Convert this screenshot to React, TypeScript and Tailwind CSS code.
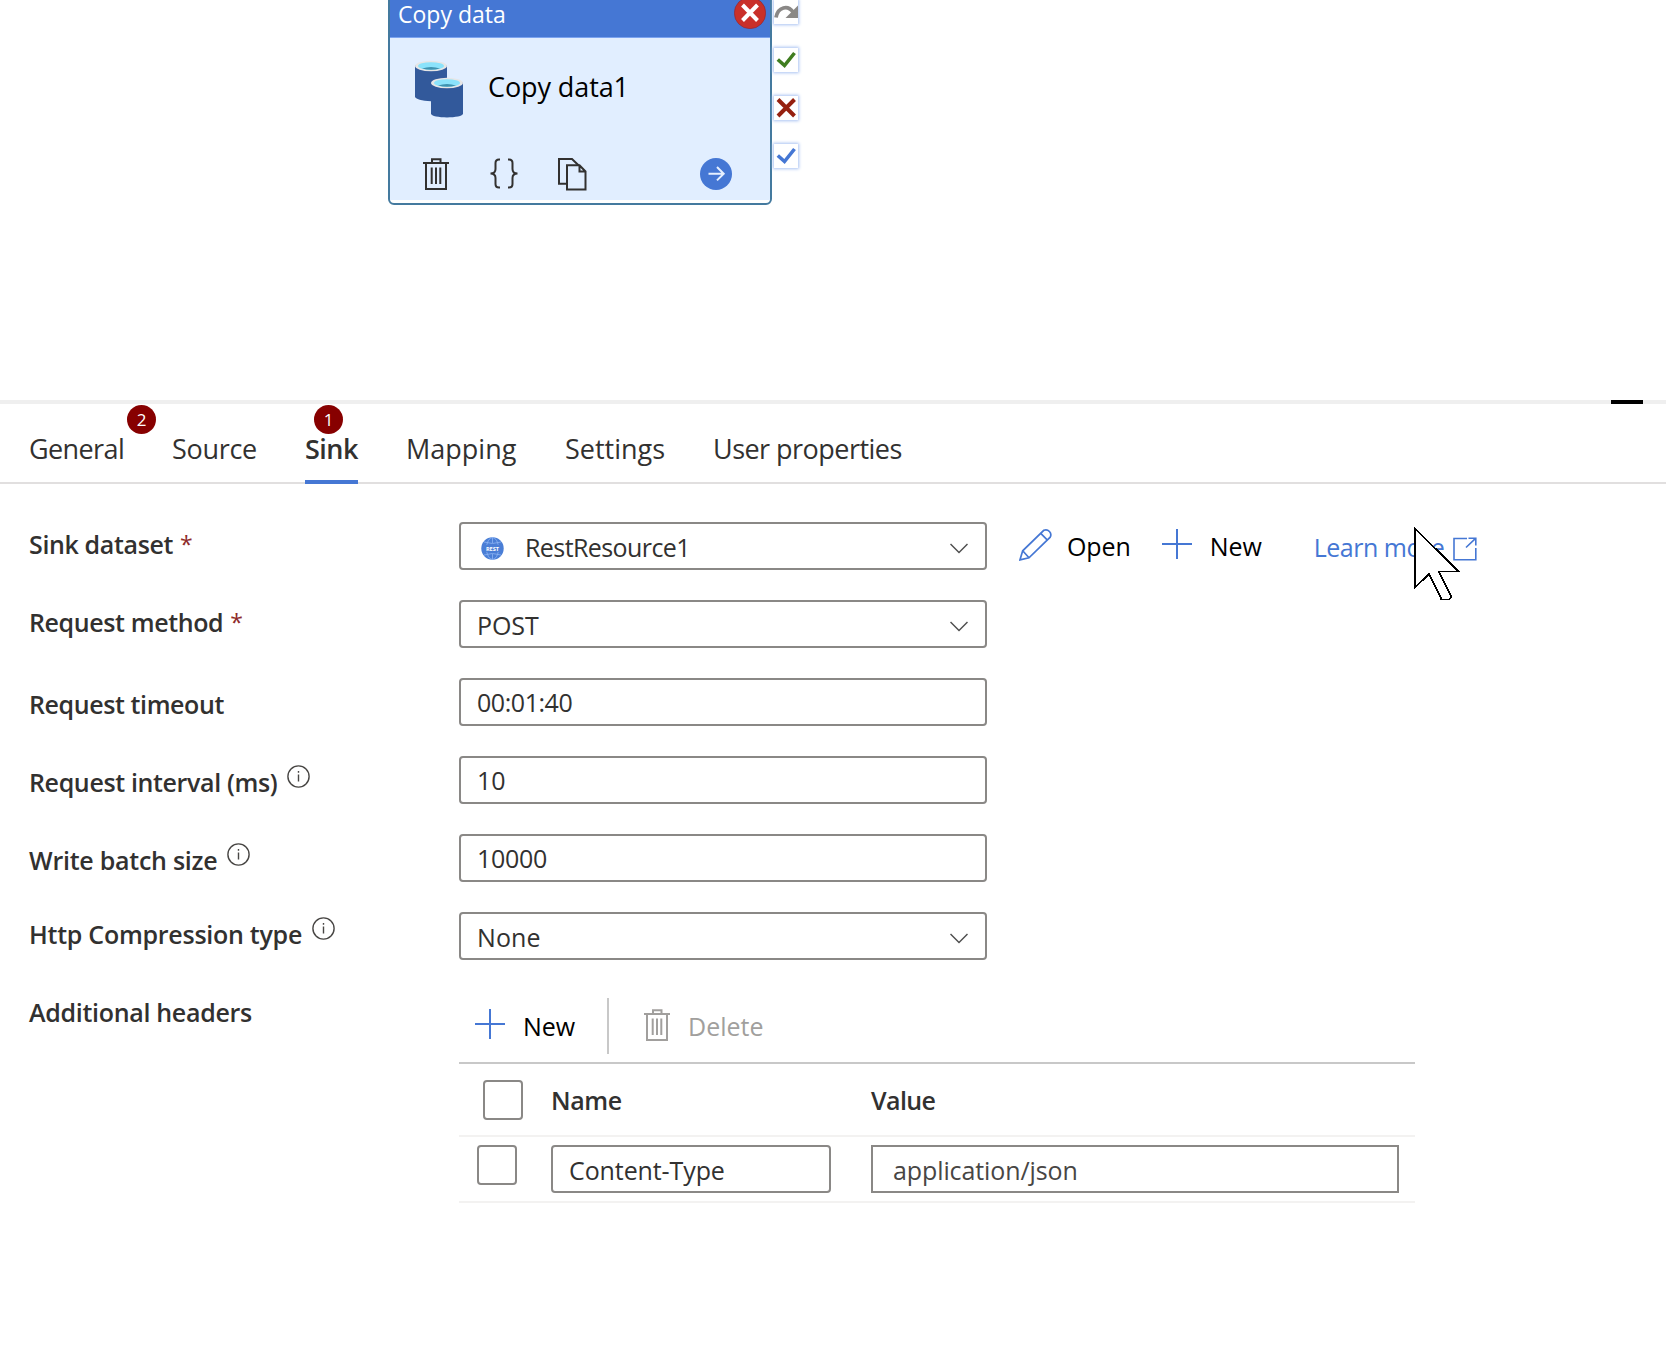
import type { ReactNode } from "react";

const BLUE = "#4577d4";

function DatabaseIcon() {
  return (
    <svg width="50" height="58" viewBox="0 0 50 58">
      <path d="M1 5.5V36.500C1 39 8 41.200 17 41.200H33V5.500Z" fill="#32599b" />
      <ellipse cx="17" cy="6" rx="16" ry="5.200" fill="#e6e6e6" />
      <ellipse cx="17" cy="6" rx="13" ry="3.800" fill="#8be3fb" />
      <path d="M8 8.600Q17 5.400 26 8.600Q17 11 8 8.600Z" fill="#3f93b0" />
      <path d="M17 22.500V53.600C17 58.800 49 58.800 49 53.600V22.500Z" fill="#32599b" />
      <ellipse cx="33" cy="23" rx="16" ry="5.200" fill="#e6e6e6" />
      <ellipse cx="33" cy="23" rx="13" ry="3.800" fill="#8be3fb" />
      <path d="M24 25.600Q33 22.400 42 25.600Q33 28 24 25.600Z" fill="#3f93b0" />
    </svg>
  );
}

function TrashIcon({ color }: { color: string }) {
  return (
    <svg width="26" height="32" viewBox="0 0 26 32" fill="none" stroke={color} strokeWidth="2">
      <path d="M0 5H26M9 5V1.200H17.500V5M3 5V31H23V5M8.700 9.500V26M13 9.500V26M17.300 9.500V26" />
    </svg>
  );
}

function BracesIcon() {
  return (
    <svg width="28" height="31" viewBox="0 0 28 31" fill="none" stroke="#323130" strokeWidth="2">
      <path d="M10 1.500H9Q5.500 1.500 5.500 5V11Q5.500 15.500 0.500 15.500Q5.500 15.500 5.500 20V26Q5.500 29.500 9 29.500H10" />
      <path d="M18 1.500H19Q22.500 1.500 22.500 5V11Q22.500 15.500 27.500 15.500Q22.500 15.500 22.500 20V26Q22.500 29.500 19 29.500H18" />
    </svg>
  );
}

function CopyIcon() {
  return (
    <svg width="29" height="33" viewBox="0 0 29 33" fill="none" stroke="#323130" strokeWidth="2">
      <path d="M8.500 25.800H1V1H14L20.500 7.200" />
      <path d="M9 7.200H21.500L27.500 13.500V31.500H9ZM21.500 7.200V13.500H27.500" />
    </svg>
  );
}

function RunIcon() {
  return (
    <svg width="32" height="32" viewBox="0 0 32 32" fill="none" stroke="#e6f0ff" strokeWidth="2">
      <circle cx="16" cy="16" r="16" fill={BLUE} stroke="none" />
      <path d="M8.500 15.700H23.500M17 9L23.700 15.700L17 22.400" />
    </svg>
  );
}

function ErrorIcon() {
  return (
    <svg width="32" height="32" viewBox="0 0 32 32">
      <circle cx="16" cy="16" r="15.700" fill="#c9302a" stroke="#8f2433" strokeWidth="0.600" />
      <path d="M8.500 8L23.500 23.500M23.500 8L8.500 23.500" stroke="#fff" strokeWidth="4" />
    </svg>
  );
}

function PlusIcon() {
  return (
    <svg width="30" height="30" viewBox="0 0 30 30" fill="none" stroke={BLUE} strokeWidth="2">
      <path d="M0 15H30M15 0V30" />
    </svg>
  );
}

function PencilIcon() {
  return (
    <svg width="33" height="33" viewBox="0 0 33 33" fill="none" stroke={BLUE} strokeWidth="1.700">
      <path d="M1 31.800L3.700 22.800L24.800 2.300A5 5 0 0 1 31.200 9.200L10 29.800Z" />
      <path d="M3.700 22.800L10 29.800M21.500 5.200L28.400 12.200" />
    </svg>
  );
}

function ExternalIcon() {
  return (
    <svg width="24" height="24" viewBox="0 0 24 24" fill="none" stroke={BLUE} strokeWidth="1.600">
      <path d="M14 1.500H1V22.800H22.800V11" />
      <path d="M13 10.500L22.600 1.300M15.500 1.300H22.800V8.500" />
    </svg>
  );
}

function InfoIcon() {
  return (
    <svg className="-mt-3 shrink-0" width="23" height="23" viewBox="0 0 23 23" fill="none" stroke="#484644">
      <circle cx="11.500" cy="11.500" r="10.600" strokeWidth="1.400" />
      <path d="M11.500 9.500V16.500M11.500 6V7.800" strokeWidth="1.400" />
    </svg>
  );
}

function RestIcon() {
  return (
    <svg width="23" height="23" viewBox="0 0 23 23">
      <circle cx="11.500" cy="11.500" r="11.200" fill="#4a7ed6" />
      <g fill="none" stroke="#8db4f2" strokeWidth="0.800">
        <ellipse cx="11.500" cy="11.500" rx="6" ry="11" />
        <path d="M3 5Q11.500 8 20 5M3 18Q11.500 15 20 18M11.500 0V6M11.500 17V23" />
      </g>
      <rect x="2.500" y="7.800" width="18" height="7" fill="#4a7ed6" />
      <text x="11.500" y="13.600" fontSize="5.600" fontWeight="700" fontFamily="Open Sans, sans-serif" textAnchor="middle" fill="#fff">
        REST
      </text>
    </svg>
  );
}

function Chevron() {
  return (
    <svg className="mt-[5px]" width="18" height="11" viewBox="0 0 18 11" fill="none" stroke="#505050" strokeWidth="1.500">
      <path d="M0.500 1L9 9.500L17.500 1" />
    </svg>
  );
}

function Cursor() {
  return (
    <svg className="absolute left-[1412px] top-[524px]" width="50" height="80" viewBox="0 0 50 80">
      <path
        d="M3 4.500V63.500L17 50L29.500 75.500H37L39.500 73L27 47.500H46.500Z"
        fill="#fff"
        stroke="#000"
        strokeWidth="1.800"
        shapeRendering="crispEdges"
      />
    </svg>
  );
}

function SideBox({ children }: { children: ReactNode }) {
  return (
    <div className="size-6 bg-white shadow-[0_0_3px_1px_#a9c2f2]">
      <svg width="24" height="24" viewBox="0 0 24 24" fill="none">
        {children}
      </svg>
    </div>
  );
}

function ActivityNode() {
  return (
    <>
      <div className="absolute left-[388px] -top-5 flex h-[225px] w-[384px] flex-col rounded-md border-2 border-[#447a9f] bg-white pb-[3px]">
        <div className="flex h-14 items-end justify-between border-b border-[#7ba3f0] bg-[#4577d4] pl-2 pr-1">
          <span className="mb-[11px] text-[23px] leading-6 text-white">Copy data</span>
          <div className="mb-2">
            <ErrorIcon />
          </div>
        </div>
        <div className="flex flex-1 flex-col bg-[#e1eeff]">
          <div className="flex items-center gap-6 pl-6 pt-[22px]">
            <DatabaseIcon />
            <span className="-mt-1 text-[27px] leading-10 tracking-[-0.1px] text-black">Copy data1</span>
          </div>
          <div className="mt-10 flex h-8 items-center pl-[33px]">
            <TrashIcon color="#323130" />
            <div className="-mt-0.5 ml-[41px]">
              <BracesIcon />
            </div>
            <div className="ml-10">
              <CopyIcon />
            </div>
            <div className="ml-[113px]">
              <RunIcon />
            </div>
          </div>
        </div>
      </div>
      <div className="absolute left-[774px] top-0 flex flex-col gap-6">
        <SideBox>
          <path d="M2 17.500C4 6.500 14 5 19 12" stroke="#8a8886" strokeWidth="3.800" />
          <path d="M24 5.500V18H11.500Z" fill="#8a8886" />
        </SideBox>
        <SideBox>
          <path d="M3.800 11.500L10.500 17.500L20.500 5" stroke="#3f7d20" strokeWidth="3.600" />
        </SideBox>
        <SideBox>
          <path d="M4 3.500L20.500 20M20.500 3.500L4 20" stroke="#96200f" strokeWidth="4" />
        </SideBox>
        <SideBox>
          <path d="M3.800 11.500L10.500 17.500L20.500 5" stroke={BLUE} strokeWidth="3.600" />
        </SideBox>
      </div>
    </>
  );
}

const badge =
  "absolute top-px flex size-[29px] items-center justify-center rounded-full bg-[#870000] text-[17px] font-normal leading-none tracking-normal text-white";

const tabs = [
  { label: "General", box: "w-[95px] tracking-[-0.6px]", badge: "2", at: "left-[98px]" },
  { label: "Source", box: "w-[85px] tracking-[-0.3px]" },
  { label: "Sink", box: "w-[53px] font-semibold tracking-[-0.5px]", badge: "1", at: "left-[9px]", active: true },
  { label: "Mapping", box: "w-[111px]" },
  { label: "Settings", box: "w-[100px]" },
  { label: "User properties", box: "w-[190px] tracking-[-0.53px]" },
];

function TabBar() {
  return (
    <div className="flex h-20 gap-12 border-b-2 border-[#e1dfdf] pl-[29px]">
      {tabs.map((t) => (
        <div key={t.label} className={`relative h-20 whitespace-nowrap pt-[9px] text-[27px] leading-[71px] ${t.box}`}>
          {t.label}
          {t.badge && <span className={`${badge} ${t.at}`}>{t.badge}</span>}
          {t.active && <span className="absolute inset-x-0 bottom-0 h-1 bg-[#4577d4]" />}
        </div>
      ))}
    </div>
  );
}

type RowProps = {
  label: string;
  spacing: string;
  required?: boolean;
  info?: boolean;
  children: ReactNode;
};

function Row({ label, spacing, required, info, children }: RowProps) {
  return (
    <div className="flex h-12 items-start">
      <div className={`flex w-[430px] shrink-0 items-center whitespace-nowrap font-semibold ${spacing}`}>
        {label}
        {required && <span className="ml-[7px] text-[23px] font-normal text-[#8e2a2a]">*</span>}
        {info && (
          <span className="ml-2.5 flex">
            <InfoIcon />
          </span>
        )}
      </div>
      {children}
    </div>
  );
}

const field = "flex h-12 w-[528px] items-center justify-between rounded border-2 border-[#8a8886] bg-white pl-4 pr-[17px]";

function Select({ value, spacing, icon }: { value: string; spacing: string; icon?: ReactNode }) {
  return (
    <div className={field}>
      <div className="flex items-center">
        {icon && <div className="ml-1 mr-[21px] mt-1">{icon}</div>}
        <span className={`mt-px leading-10 ${spacing}`}>{value}</span>
      </div>
      <Chevron />
    </div>
  );
}

function Input({ value, spacing }: { value: string; spacing: string }) {
  return (
    <div className={field}>
      <span className={`leading-[44px] ${spacing}`}>{value}</span>
    </div>
  );
}

function HeadersTable() {
  return (
    <div className="w-[956px]">
      <div className="flex h-[74px] items-start border-b-2 border-[#c8c8c8] pl-4 pt-2">
        <div className="mt-[11px]">
          <PlusIcon />
        </div>
        <span className="ml-[18px] mt-0.5 w-[52px] leading-[52px] text-black">New</span>
        <div className="ml-8 h-14 w-0.5 bg-[#c8c8c8]" />
        <div className="ml-[35px] mt-[11px]">
          <TrashIcon color="#a19f9d" />
        </div>
        <span className="ml-[18px] mt-0.5 leading-[52px] text-[#a19f9d]">Delete</span>
      </div>
      <div className="flex h-[73px] items-center border-b-2 border-[#f3f2f1] pl-6 font-semibold">
        <div className="size-10 rounded border-2 border-[#8a8886]" />
        <span className="ml-7 mt-[3px] w-[320px] tracking-[-0.4px]">Name</span>
        <span className="mt-[3px] tracking-[-0.6px]">Value</span>
      </div>
      <div className="flex h-[66px] border-b-2 border-[#f3f2f1] pl-[18px] pt-2">
        <div className="size-10 rounded border-2 border-[#8a8886]" />
        <div className="ml-[34px] h-12 w-[280px] rounded border-2 border-[#8a8886] pl-4 leading-[47px] tracking-[-0.1px]">Content-Type</div>
        <div className="ml-10 h-12 w-[528px] border-2 border-[#8a8886] pl-5 leading-[47px] tracking-[-0.1px] text-[#484644]">
          application/json
        </div>
      </div>
    </div>
  );
}

const high = "leading-[44px]";
const low = "leading-[52px]";

export default function App() {
  return (
    <div className="relative h-[1362px] w-[1666px] overflow-hidden bg-white font-['Open_Sans',sans-serif] text-[25px] text-[#323130]">
      <div className="relative h-[400px]">
        <ActivityNode />
      </div>
      <div className="flex h-1 justify-end bg-[#efefef] pr-[23px]">
        <div className="w-8 bg-black" />
      </div>
      <TabBar />
      <div className="flex flex-col gap-[30px] pl-[29px] pt-[38px]">
        <Row label="Sink dataset" spacing={`${high} tracking-[-0.36px]`} required>
          <Select value="RestResource1" spacing="tracking-[-0.58px]" icon={<RestIcon />} />
          <div className="ml-8 flex items-start text-black">
            <div className="mt-1.5">
              <PencilIcon />
            </div>
            <span className="ml-[15px] leading-[49px] tracking-[-0.1px]">Open</span>
            <div className="ml-[31px] mt-[7px]">
              <PlusIcon />
            </div>
            <span className="ml-[18px] w-[52px] leading-[49px]">New</span>
            <a className="ml-[52px] mt-px leading-[49px] tracking-[-0.5px] text-[#4577d4]">Learn more</a>
            <div className="ml-[9px] mt-[15px]">
              <ExternalIcon />
            </div>
          </div>
        </Row>
        <Row label="Request method" spacing={`${high} tracking-[-0.38px]`} required>
          <Select value="POST" spacing="tracking-[-0.1px]" />
        </Row>
        <Row label="Request timeout" spacing={`${low} tracking-[-0.4px]`}>
          <Input value="00:01:40" spacing="tracking-[-0.45px]" />
        </Row>
        <Row label="Request interval (ms)" spacing={`${low} tracking-[-0.36px]`} info>
          <Input value="10" spacing="tracking-[-0.1px]" />
        </Row>
        <Row label="Write batch size" spacing={`${low} tracking-[-0.25px]`} info>
          <Input value="10000" spacing="tracking-[-0.3px]" />
        </Row>
        <Row label="Http Compression type" spacing={`${high} tracking-[-0.26px]`} info>
          <Select value="None" spacing="tracking-[0.1px]" />
        </Row>
        <Row label="Additional headers" spacing={`${high} tracking-[-0.3px]`}>
          <HeadersTable />
        </Row>
      </div>
      <Cursor />
    </div>
  );
}
